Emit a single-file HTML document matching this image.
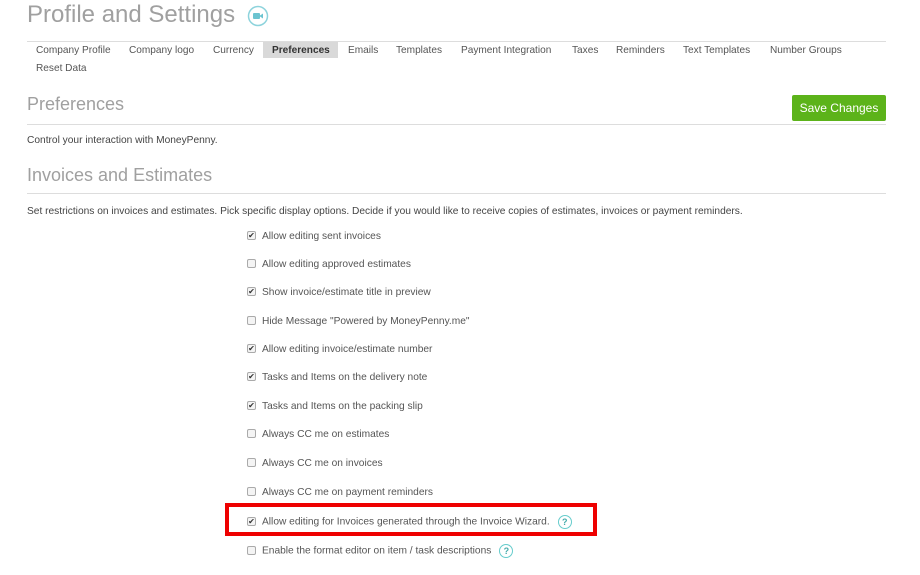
<!DOCTYPE html>
<html><head><style>
body{margin:0;width:920px;height:575px;background:#fff;font-family:"Liberation Sans",sans-serif;color:#444;position:relative;overflow:hidden}
.a{position:absolute;white-space:nowrap}
.t{font-size:10.1px;color:#555;top:45px}
.h{color:#a0a0a0;font-weight:300}
.line{position:absolute;height:1px;background:#ddd;left:27px;width:859px}
.row{position:absolute;left:247px;font-size:10.2px;color:#555;height:12px;line-height:12px}
.cb{display:inline-block;width:7px;height:7px;border:1px solid #aaa;border-radius:2px;background:#f4f4f4;vertical-align:middle;margin-right:6px;position:relative;top:-1px;font-size:8px;line-height:7px;text-align:center;color:#333}
.q{display:inline-block;width:12px;height:12px;border:1.5px solid #6cc;border-radius:50%;color:#4aa;font-size:9px;line-height:12px;text-align:center;font-weight:bold;margin-left:8px;vertical-align:middle}
</style></head><body>
<div class="a h" style="left:27px;top:1px;font-size:24px">Profile and Settings</div>
<svg class="a" style="left:247px;top:5px" width="22" height="22"><circle cx="11" cy="11" r="9.5" fill="none" stroke="#8dd3dc" stroke-width="1.5"/><rect x="6" y="8" width="7" height="6" rx="1" fill="#6cc4d0"/><path d="M13 10.5L16 8.5V13.5L13 11.5Z" fill="#6cc4d0"/></svg>
<div class="line" style="top:41px"></div>
<div class="a" style="left:263px;top:42px;width:75px;height:16px;background:#d9d9d9"></div>
<div class="a t" style="left:36px">Company Profile</div>
<div class="a t" style="left:129px">Company logo</div>
<div class="a t" style="left:213px">Currency</div>
<div class="a t" style="left:272px;font-weight:bold;color:#333">Preferences</div>
<div class="a t" style="left:348px">Emails</div>
<div class="a t" style="left:396px">Templates</div>
<div class="a t" style="left:461px">Payment Integration</div>
<div class="a t" style="left:572px">Taxes</div>
<div class="a t" style="left:616px">Reminders</div>
<div class="a t" style="left:683px">Text Templates</div>
<div class="a t" style="left:770px">Number Groups</div>
<div class="a t" style="left:36px;top:63px">Reset Data</div>
<div class="a h" style="left:27px;top:94px;font-size:18px">Preferences</div>
<div class="a" style="left:792px;top:95px;width:94px;height:26px;background:#5cb31a;border-radius:2px;color:#fff;font-size:12px;line-height:26px;text-align:center">Save Changes</div>
<div class="line" style="top:124px"></div>
<div class="a" style="left:27px;top:135px;font-size:10.2px;color:#444">Control your interaction with MoneyPenny.</div>
<div class="a h" style="left:27px;top:165px;font-size:18px">Invoices and Estimates</div>
<div class="line" style="top:193px"></div>
<div class="a" style="left:27px;top:206px;font-size:10.2px;color:#444">Set restrictions on invoices and estimates. Pick specific display options. Decide if you would like to receive copies of estimates, invoices or payment reminders.</div>
<div class="row" style="top:231px"><span class="cb">✔</span>Allow editing sent invoices</div>
<div class="row" style="top:259px"><span class="cb"></span>Allow editing approved estimates</div>
<div class="row" style="top:287px"><span class="cb">✔</span>Show invoice/estimate title in preview</div>
<div class="row" style="top:316px"><span class="cb"></span>Hide Message "Powered by MoneyPenny.me"</div>
<div class="row" style="top:344px"><span class="cb">✔</span>Allow editing invoice/estimate number</div>
<div class="row" style="top:372px"><span class="cb">✔</span>Tasks and Items on the delivery note</div>
<div class="row" style="top:401px"><span class="cb">✔</span>Tasks and Items on the packing slip</div>
<div class="row" style="top:429px"><span class="cb"></span>Always CC me on estimates</div>
<div class="row" style="top:458px"><span class="cb"></span>Always CC me on invoices</div>
<div class="row" style="top:487px"><span class="cb"></span>Always CC me on payment reminders</div>
<div class="a" style="left:225px;top:503px;width:364px;height:25px;border:4px solid #e00"></div>
<div class="row" style="top:515px"><span class="cb">✔</span>Allow editing for Invoices generated through the Invoice Wizard.<span class="q">?</span></div>
<div class="row" style="top:544px"><span class="cb"></span>Enable the format editor on item / task descriptions<span class="q">?</span></div>
</body></html>
